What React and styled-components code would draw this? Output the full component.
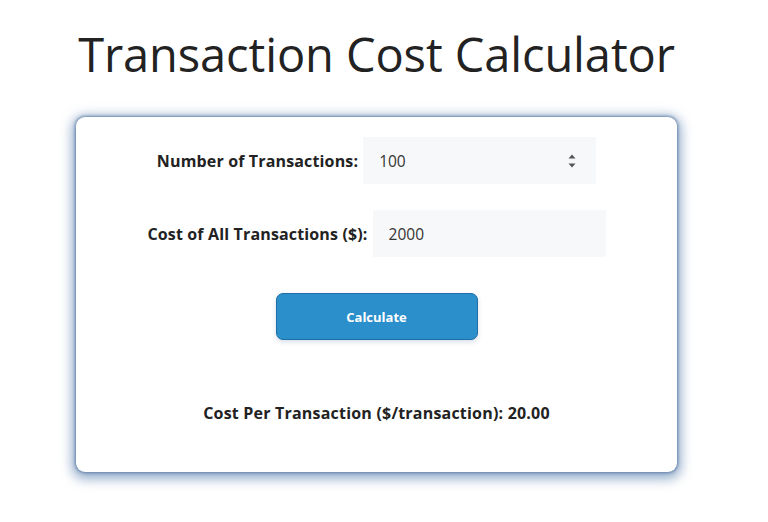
import React, { useState } from 'react';
import styled, { createGlobalStyle } from 'styled-components';

const GlobalStyle = createGlobalStyle`
  * {
    box-sizing: border-box;
  }
  body {
    margin: 0;
    background: #fff;
    font-family: 'Open Sans', 'Noto Sans', sans-serif;
    color: #222;
  }
`;

const Page = styled.div`
  width: 768px;
  min-height: 100vh;
  padding: 22px 0 40px 76px;
`;

const Title = styled.h1`
  margin: 0 0 31px;
  width: 601px;
  text-align: center;
  white-space: nowrap;
  font-size: 47px;
  font-weight: 400;
  line-height: 64px;
  color: #222;
  letter-spacing: -0.1px;
`;

const Card = styled.div`
  width: 601px;
  height: 355px;
  background: #fff;
  border-radius: 9px;
  padding: 20px 0 0;
  box-shadow: 0 0 3px 1px rgba(70, 105, 150, 0.7), 0 3px 12px 4px rgba(80, 120, 170, 0.6);
  display: flex;
  flex-direction: column;
  align-items: center;
`;

const Row = styled.div`
  display: flex;
  align-items: center;
  gap: 5px;
  margin-bottom: ${({ $space }) => $space}px;
`;

const Label = styled.label`
  font-size: 16px;
  font-weight: 700;
  color: #222;
  letter-spacing: 0.15px;
`;

const FieldWrap = styled.div`
  position: relative;
`;

const Field = styled.input`
  width: 233px;
  height: 47px;
  border: none;
  outline: none;
  background: #f7f8f9;
  padding: 0 28px 0 16px;
  font-family: inherit;
  font-size: 15.5px;
  color: #333;
  -moz-appearance: textfield;
  &::-webkit-inner-spin-button,
  &::-webkit-outer-spin-button {
    -webkit-appearance: none;
    margin: 0;
  }
`;

const Spinner = styled.div`
  position: absolute;
  right: 20px;
  top: 50%;
  transform: translateY(-50%);
  display: flex;
  flex-direction: column;
  gap: 4px;
  cursor: pointer;
`;

const Button = styled.button`
  width: 202px;
  height: 47px;
  background: #2a8fcb;
  border: 1px solid #1f6ea5;
  border-radius: 7px;
  color: #fff;
  font-family: inherit;
  font-size: 13px;
  font-weight: 700;
  box-shadow: 0 2px 5px rgba(40, 90, 140, 0.2);
  cursor: pointer;
`;

const Result = styled.div`
  margin-top: 62px;
  font-size: 16px;
  font-weight: 700;
  color: #222;
  letter-spacing: 0.2px;
`;

const App = () => {
  const [count, setCount] = useState('100');
  const [total, setTotal] = useState('2000');
  const [result, setResult] = useState('20.00');

  const calculate = () => {
    const n = parseFloat(count);
    const t = parseFloat(total);
    if (n > 0 && !isNaN(t)) setResult((t / n).toFixed(2));
  };

  const step = (d) => setCount(String((parseFloat(count) || 0) + d));

  return (
    <Page>
      <GlobalStyle />
      <Title>Transaction Cost Calculator</Title>
      <Card>
        <Row $space={26}>
          <Label>Number of Transactions:</Label>
          <FieldWrap>
            <Field type="number" value={count} onChange={(e) => setCount(e.target.value)} />
            <Spinner>
              <svg width="8" height="5" viewBox="0 0 8 5" onClick={() => step(1)}>
                <path d="M4 0.5 L7.5 4.5 L0.5 4.5 Z" fill="#555" />
              </svg>
              <svg width="8" height="5" viewBox="0 0 8 5" onClick={() => step(-1)}>
                <path d="M0.5 0.5 L7.5 0.5 L4 4.5 Z" fill="#555" />
              </svg>
            </Spinner>
          </FieldWrap>
        </Row>
        <Row $space={36}>
          <Label>Cost of All Transactions ($):</Label>
          <Field type="text" value={total} onChange={(e) => setTotal(e.target.value)} />
        </Row>
        <Button onClick={calculate}>Calculate</Button>
        <Result>Cost Per Transaction ($/transaction): {result}</Result>
      </Card>
    </Page>
  );
};

export default App;
